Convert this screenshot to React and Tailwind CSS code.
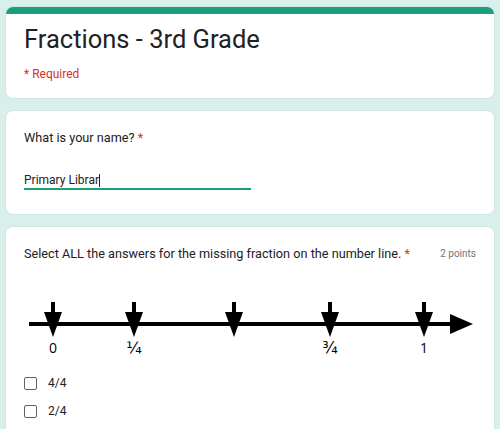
import React from 'react';

const ticks = [47, 128, 228, 324, 418];

const NumberLine = () => (
  <svg width="490" height="64" viewBox="0 0 490 64" className="block">
    {/* main line */}
    <rect x="23" y="24" width="424" height="4" fill="#000" />
    <polygon points="444,16 467,26 444,36" fill="#000" />
    {ticks.map((x) => (
      <g key={x}>
        <rect x={x - 2} y="4" width="4" height="12" fill="#000" />
        <polygon points={`${x - 9},14 ${x + 9},14 ${x},39`} fill="#000" />
      </g>
    ))}
    <text x="47" y="55" textAnchor="middle" fontSize="14" fontFamily="'Open Sans', sans-serif">0</text>
    <text x="128" y="55" textAnchor="middle" fontSize="16" fontFamily="'DejaVu Sans', sans-serif">¼</text>
    <text x="324" y="55" textAnchor="middle" fontSize="16" fontFamily="'DejaVu Sans', sans-serif">¾</text>
    <text x="418" y="55" textAnchor="middle" fontSize="14" fontFamily="'Open Sans', sans-serif">1</text>
  </svg>
);

const Option = ({ label }) => (
  <div className="flex items-center gap-[11px] h-[28px]">
    <div className="w-[13px] h-[13px] border-[1.5px] border-[#5f6368] rounded-[2px]" />
    <span className="text-[12px] text-[#202124]">{label}</span>
  </div>
);

export default function App() {
  return (
    <div className="w-[500px] h-[429px] overflow-hidden bg-[#d9efeb] px-[5px] pt-[6px] font-['Roboto',sans-serif]">
      {/* header card */}
      <div className="bg-white rounded-[8px] overflow-hidden border border-[#cfe6e1] h-[93px]">
        <div className="h-[7px] bg-[#1a9e80]" />
        <div className="px-[18px] pt-[8px]">
          <h1 className="text-[25.5px] leading-[34px] text-[#202124]">Fractions - 3rd Grade</h1>
          <p className="mt-[10px] text-[12px] leading-[16px] text-[#d93025]">* Required</p>
        </div>
      </div>

      {/* name card */}
      <div className="mt-[11px] bg-white rounded-[8px] border border-[#cfe6e1] px-[18px] pt-[17px] h-[105px]">
        <p className="text-[12.7px] leading-[20px] text-[#202124]">
          What is your name? <span className="text-[#d93025]">*</span>
        </p>
        <div className="mt-[24px] w-[227px] h-[18px] flex items-center border-b-2 border-[#1a9e80]">
          <span className="text-[12px] leading-[16px] text-[#202124]">Primary Librar</span>
          <span className="w-px h-[13px] bg-[#202124]" />
        </div>
      </div>

      {/* question card */}
      <div className="mt-[11px] bg-white rounded-[8px] border border-[#cfe6e1] pt-[17px] h-[230px]">
        <div className="flex items-start justify-between px-[18px]">
          <p className="text-[12.7px] leading-[20px] text-[#202124]">
            Select ALL the answers for the missing fraction on the number line. <span className="text-[#d93025]">*</span>
          </p>
          <span className="text-[10px] leading-[20px] text-[#70757a] shrink-0 ml-2">2 points</span>
        </div>
        <div className="mt-[34px]">
          <NumberLine />
        </div>
        <div className="px-[18px] mt-[7px]">
          <Option label="4/4" />
          <Option label="2/4" />
        </div>
      </div>
    </div>
  );
}
